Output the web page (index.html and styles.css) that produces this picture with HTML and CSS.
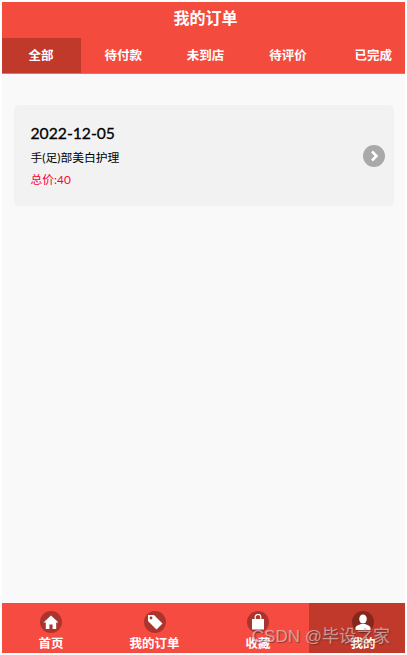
FILE: index.html
```html
<!DOCTYPE html>
<html lang="zh-CN">
<head>
  <meta charset="UTF-8">
  <title>我的订单</title>
  <link rel="stylesheet" href="styles.css">
</head>
<body>

  <div class="page">
    <header class="top">
      <h1 class="title">我的订单</h1>
      <nav class="tabs">
        <a href="#" class="tab active">全部</a>
        <a href="#" class="tab">待付款</a>
        <a href="#" class="tab">未到店</a>
        <a href="#" class="tab">待评价</a>
        <a href="#" class="tab tab_last">已完成</a>
      </nav>
    </header>

    <main class="content">
      <a href="#" class="order">
        <div class="order_info">
          <p class="order_date">2022-12-05</p>
          <p class="order_name">手(足)部美白护理</p>
          <p class="order_price">总价:40</p>
        </div>
        <span class="arrow">
          <svg width="12" height="12" viewBox="0 0 12 12"><path d="M4 1.5 8.5 6 4 10.5" fill="none" stroke="#fff" stroke-width="2.6"/></svg>
        </span>
      </a>
    </main>

    <footer class="bottom">
      <a href="#" class="nav_item">
        <span class="nav_icon">
          <svg width="16" height="16" viewBox="0 0 16 16"><path d="M8 1.5 15.5 8.5H13.2V15H9.6V10.5H6.4V15H2.8V8.5H.5Z" fill="#fff"/></svg>
        </span>
        <span class="nav_label">首页</span>
      </a>
      <a href="#" class="nav_item">
        <span class="nav_icon">
          <svg width="18" height="18" viewBox="0 0 18 18"><path d="M2 2H8L16.5 10.5 10.5 16.5 2 8ZM5 3.6A1.4 1.4 0 1 0 5 6.4 1.4 1.4 0 1 0 5 3.6Z" fill="#fff" fill-rule="evenodd"/></svg>
        </span>
        <span class="nav_label">我的订单</span>
      </a>
      <a href="#" class="nav_item">
        <span class="nav_icon">
          <svg width="16" height="16" viewBox="0 0 16 16"><path d="M2 5H14V15.5H2Z" fill="#fff"/><path d="M5.2 7V3.2A2.8 2.8 0 0 1 10.8 3.2V7" fill="none" stroke="#fff" stroke-width="1.2"/></svg>
        </span>
        <span class="nav_label">收藏</span>
      </a>
      <a href="#" class="nav_item active">
        <span class="nav_icon">
          <svg width="18" height="18" viewBox="0 0 18 18"><ellipse cx="9" cy="6" rx="3.8" ry="4.6" fill="#fff"/><path d="M1.5 17V15C1.5 12.8 5 12 7 11H11C13 12 16.5 12.8 16.5 15V17Z" fill="#fff"/></svg>
        </span>
        <span class="nav_label">我的</span>
      </a>
    </footer>

    <div class="watermark">CSDN @毕设之家</div>
  </div>

</body>
</html>
```

FILE: styles.css
```css
html, body {
  height: 100%;
}

body {
  margin: 0;
  padding: 2px;
  box-sizing: border-box;
  background: #fff;
  font-family: Lato, "Noto Sans CJK SC", sans-serif;
}

a {
  text-decoration: none;
  color: inherit;
}

p {
  margin: 0;
}

.page {
  height: 100%;
  display: flex;
  flex-direction: column;
  background: #f9f9f9;
  position: relative;
  overflow: hidden;
}

/* header */
.top {
  background: #f44b3f;
  border-bottom: 1px solid #f8695f;
  color: #fff;
}

.title {
  margin: 0;
  padding-left: 4px;
  height: 36px;
  line-height: 32px;
  font-size: 16px;
  font-weight: bold;
  text-align: center;
}

.tabs {
  display: flex;
}

.tab {
  flex: none;
  width: 78px;
  height: 35px;
  margin-right: 4.3px;
  line-height: 36px;
  font-size: 12.5px;
  font-weight: bold;
  text-align: center;
}

.tab.active {
  width: 79px;
  margin-right: 3.3px;
  padding-right: 1px;
  box-sizing: border-box;
  background: #c0392b;
}

.tab_last {
  margin-left: 3px;
}

/* order list */
.content {
  flex: 1;
  padding: 31px 11px 0 12px;
}

.order {
  height: 101px;
  box-sizing: border-box;
  padding: 17px 9px 0 16.5px;
  display: flex;
  justify-content: space-between;
  background: #f2f2f2;
  border-radius: 5px;
  color: #000;
}

.order_date {
  font-size: 15.7px;
  -webkit-text-stroke: 0.3px #000;
  line-height: 22px;
}

.order_name {
  margin-top: 4px;
  font-size: 11.8px;
  line-height: 20px;
}

.order_price {
  margin-top: 2px;
  font-size: 11.8px;
  line-height: 20px;
  color: #ff0033;
}

.arrow {
  width: 22px;
  height: 22px;
  margin-top: 23px;
  border-radius: 50%;
  background: #a9a9a9;
  display: flex;
  align-items: center;
  justify-content: center;
}

/* bottom nav */
.bottom {
  height: 50px;
  display: flex;
  background: #f64b41;
  color: #fff;
}

.nav_item {
  flex: none;
  width: 103.5px;
  box-sizing: border-box;
  padding: 8px 0 0 1.5px;
  display: flex;
  flex-direction: column;
  align-items: center;
}

.nav_item:first-child {
  margin-left: -3.5px;
}

.nav_item.active {
  width: 108px;
  padding-left: 0;
  background: #c0392b;
}

.nav_icon {
  width: 22px;
  height: 22px;
  border-radius: 50%;
  background: rgba(0, 0, 0, 0.3);
  display: flex;
  align-items: center;
  justify-content: center;
}

.nav_label {
  margin-top: 2px;
  font-size: 12.5px;
  font-weight: bold;
  line-height: 18px;
}

.watermark {
  position: absolute;
  right: 15px;
  bottom: 6px;
  font-family: "Liberation Sans", "Noto Sans CJK SC", sans-serif;
  font-size: 17px;
  line-height: 20px;
  color: rgba(225, 225, 225, 0.6);
  text-shadow: 1px 1px 1px rgba(90, 40, 40, 0.6);
}
```
